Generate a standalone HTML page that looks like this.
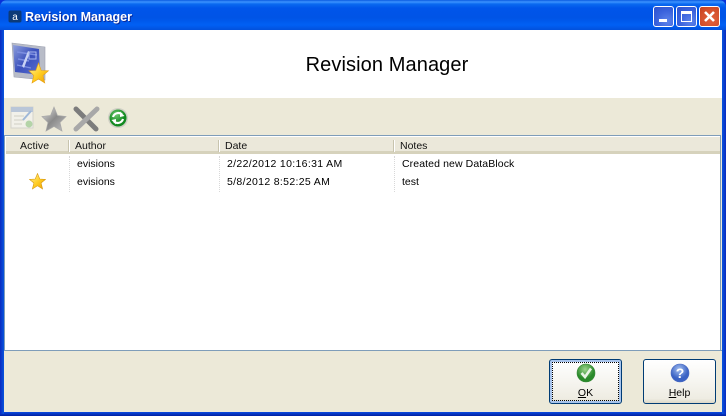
<!DOCTYPE html>
<html>
<head>
<meta charset="utf-8">
<style>
html,body{margin:0;padding:0;width:726px;height:416px;overflow:hidden;background:#0831d9}
*{box-sizing:border-box}
body{position:relative;font-family:"Liberation Sans",Tahoma,sans-serif;font-size:11px;color:#000}
.a{position:absolute}
#title{left:0;top:0;width:726px;height:30px;border-radius:7px 7px 0 0;background:linear-gradient(180deg,#0a5be0 0,#3c93ff 2px,#0a6af0 4px,#0055ea 8px,#0054e6 18px,#0160f4 25px,#0250dc 30px)}
#ttext{left:25px;top:10px;font-size:12.5px;font-weight:bold;color:#fff;text-shadow:1px 1px 0 #0a2a9a;white-space:nowrap}
.wb{top:6px;width:21px;height:21px;border:1px solid #fff;border-radius:3px;background:radial-gradient(circle at 70% 75%,#5d83ea 0,#3a62dc 55%,#2c50cc 100%)}
#client{left:4px;top:30px;width:718px;height:382px;background:#ece9d8}
#head{left:0;top:0;width:718px;height:68px;background:#fff}
#h1{left:0;top:22px;width:766px;text-align:center;font-size:20px;line-height:26px;color:#000;letter-spacing:.1px}
#list{left:0;top:105px;width:717px;height:216px;background:#fff;border:1px solid #7f9db9}
#lh{left:1px;top:1px;width:714px;height:17px;background:#ebe8da;border-bottom:3px solid #d6d2bc}
.sep{top:4px;height:12px;background:#c8c4ae;border-right:1px solid #fff;width:2px}
.ht{top:4px;color:#111;font-size:10.5px;line-height:13px;white-space:nowrap}
.c{font-size:10.5px;line-height:13px;white-space:nowrap;color:#000}
.dl{top:20px;height:36px;width:1px;border-left:1px dotted #d8d8d8}
.btn{top:329px;width:73px;height:45px;border:1px solid #003c74;border-radius:3px;background:linear-gradient(180deg,#fff 0,#f6f5f0 50%,#eeece2 90%,#dcd8c8 100%);text-align:center}
.btn span{position:absolute;left:0;right:0;top:27px;font-size:10.5px;line-height:13px}
</style>
</head>
<body>
<div class="a" id="title"></div>
<svg class="a" style="left:8px;top:10px" width="14" height="13" viewBox="0 0 14 13"><rect x="0.5" y="0.5" width="13" height="12" rx="2" fill="#0c3a78"/><text x="7" y="10" font-size="10" font-family="Liberation Sans" fill="#fff" text-anchor="middle">a</text></svg>
<div class="a" id="ttext">Revision Manager</div>
<div class="a wb" style="left:653px"><div class="a" style="left:5px;top:12px;width:8px;height:3px;background:#fff"></div></div>
<div class="a wb" style="left:676px"><div class="a" style="left:4px;top:4px;width:11px;height:11px;border:1px solid #fff;border-top:3px solid #fff"></div></div>
<div class="a wb" style="left:699px;background:radial-gradient(circle at 60% 65%,#e2623c 0,#d4502c 60%,#c43e1c 100%)"><svg class="a" style="left:3px;top:3px" width="13" height="13" viewBox="0 0 13 13"><path d="M2 2 L11 11 M11 2 L2 11" stroke="#fff" stroke-width="2.6"/></svg></div>

<div class="a" id="client">
 <div class="a" id="head">
  <svg class="a" style="left:7px;top:12px" width="40" height="46" viewBox="0 0 40 46">
   <defs><linearGradient id="s" x1="0" y1="0" x2="1" y2="1"><stop offset="0" stop-color="#fff5a0"/><stop offset=".55" stop-color="#ffcc20"/><stop offset="1" stop-color="#e89a08"/></linearGradient>
   <linearGradient id="m" x1="0" y1="0" x2="1" y2="1"><stop offset="0" stop-color="#8fa0dc"/><stop offset=".5" stop-color="#3a50bc"/><stop offset="1" stop-color="#5a70d0"/></linearGradient></defs>
   <path d="M1 1 L34 5 L34 38 L3 35 Z" fill="#b8bcc8" stroke="#9ca0b0" stroke-width=".6"/>
   <path d="M2 3 L28 7 L29 33 L4 30 Z" fill="url(#m)"/>
   <path d="M6 10 L26 13 M6 23 L20 26 M7 17 L18 19" stroke="#7c8ee0" stroke-width="1.4" fill="none"/>
   <path d="M11 24 L17 9 L19 10 L13 26 Z" fill="#c8d2f4"/>
   <rect x="18" y="10" width="7" height="7" fill="none" stroke="#aab8f0"/>
   <path d="M27.500 21 L30.200 28.500 L37.500 28.800 L32 33.500 L33.800 41 L27.500 37 L21 41 L22.800 33.500 L18 28.800 L24.800 28.500 Z" fill="url(#s)" stroke="#e8a010" stroke-width=".6"/>
  </svg>
  <div class="a" id="h1">Revision Manager</div>
 </div>
 <svg class="a" style="left:6px;top:74px" width="128" height="28" viewBox="0 0 128 28">
  <defs>
   <linearGradient id="g1" x1="0" y1="0" x2="1" y2="1"><stop offset="0" stop-color="#e8e8e8"/><stop offset=".5" stop-color="#8a8a8a"/><stop offset="1" stop-color="#c4c4c4"/></linearGradient>
   <radialGradient id="g2" cx=".4" cy=".3"><stop offset="0" stop-color="#70c870"/><stop offset="1" stop-color="#128a20"/></radialGradient>
  </defs>
  <rect x="1" y="3" width="22" height="21" fill="#f2f1ea" stroke="#d4d4cc"/>
  <rect x="1" y="3" width="22" height="5" fill="#b9c6d8"/>
  <path d="M4 12 H14 M4 16 H14 M4 20 H12" stroke="#d0d0c4"/>
  <path d="M13 16 L21 7" stroke="#9fb8d8" stroke-width="2"/>
  <circle cx="19" cy="20" r="3.500" fill="#b4d4a8"/>
  <path d="M44 3 L47.500 11.500 L56 12.500 L50 18.500 L52 27 L44 22.500 L36 27 L38 18.500 L32 12.500 L40.500 11.500 Z" fill="url(#g1)" stroke="#a8a8a8" stroke-width=".7"/>
  <path d="M66 5 L86 25" stroke="#7c7c7c" stroke-width="5" stroke-linecap="round"/>
  <path d="M87 5 L66 25" stroke="#a8a8a8" stroke-width="5" stroke-linecap="round"/>
  <circle cx="108" cy="14" r="10" fill="#cfcfc4"/>
  <circle cx="108" cy="14" r="8.500" fill="url(#g2)"/>
  <path d="M103 13 A5.500 5.500 0 0 1 112 10.500 M113 15 A5.500 5.500 0 0 1 104 17.500" stroke="#fff" stroke-width="2.200" fill="none"/>
  <path d="M110 7.500 L114.500 12 L110 13 Z M106 20.500 L101.500 16 L106 15 Z" fill="#fff"/>
 </svg>
 <div class="a" id="list">
  <div class="a" id="lh"></div>
  <div class="a ht" style="left:15px;letter-spacing:.1px">Active</div>
  <div class="a sep" style="left:63px"></div>
  <div class="a ht" style="left:70px">Author</div>
  <div class="a sep" style="left:213px"></div>
  <div class="a ht" style="left:220px">Date</div>
  <div class="a sep" style="left:388px"></div>
  <div class="a ht" style="left:395px">Notes</div>
  <div class="a dl" style="left:64px"></div>
  <div class="a dl" style="left:214px"></div>
  <div class="a dl" style="left:389px"></div>
  <div class="a c" style="left:72px;top:22px">evisions</div>
  <div class="a c" style="left:222px;top:22px;letter-spacing:.33px">2/22/2012 10:16:31 AM</div>
  <div class="a c" style="left:397px;top:22px;letter-spacing:.1px">Created new DataBlock</div>
  <svg class="a" style="left:24px;top:37px" width="17" height="17" viewBox="0 0 17 17"><path d="M8.500 0.500 L10.800 6 L16.500 6.400 L12.100 10 L13.600 16 L8.500 12.800 L3.400 16 L4.900 10 L0.500 6.400 L6.200 6 Z" fill="url(#s)" stroke="#d89810" stroke-width=".6"/></svg>
  <div class="a c" style="left:72px;top:40px">evisions</div>
  <div class="a c" style="left:222px;top:40px;letter-spacing:.33px">5/8/2012 8:52:25 AM</div>
  <div class="a c" style="left:397px;top:40px">test</div>
 </div>
 <div class="a" style="left:0;top:320px;width:718px;height:1px;background:#7f9db9"></div>
 <div class="a btn" style="left:545px;box-shadow:inset 0 0 0 2px #a8c4ec">
  <div class="a" style="left:2px;top:2px;right:2px;bottom:2px;border:1px dotted #000"></div>
  <svg class="a" style="left:26px;top:3px" width="20" height="20" viewBox="0 0 20 20"><defs><radialGradient id="g3" cx=".45" cy=".3"><stop offset="0" stop-color="#9cd48c"/><stop offset="1" stop-color="#2a8a2a"/></radialGradient></defs><circle cx="10" cy="10" r="9" fill="url(#g3)" stroke="#3a8a3a" stroke-width=".6"/><path d="M5.500 10 L9 14 L15 5.500" stroke="#e8f4e4" stroke-width="2.600" fill="none"/></svg>
  <span><u>O</u>K</span>
 </div>
 <div class="a btn" style="left:639px">
  <svg class="a" style="left:26px;top:3px" width="20" height="20" viewBox="0 0 20 20"><defs><radialGradient id="g4" cx=".45" cy=".3"><stop offset="0" stop-color="#a4c0f0"/><stop offset="1" stop-color="#3a62c4"/></radialGradient></defs><circle cx="10" cy="10" r="9" fill="url(#g4)" stroke="#4a6ac0" stroke-width=".6"/><text x="10" y="15" font-size="14" font-weight="bold" font-family="Liberation Sans" fill="#fff" text-anchor="middle">?</text></svg>
  <span><u>H</u>elp</span>
 </div>
</div>
<div class="a" style="left:0;top:412px;width:726px;height:4px;background:linear-gradient(180deg,#0a4ae0,#001ea0)"></div>
<div class="a" style="left:0;top:30px;width:4px;height:384px;background:linear-gradient(90deg,#0a2ac0,#0855dd)"></div>
<div class="a" style="left:722px;top:30px;width:4px;height:384px;background:linear-gradient(90deg,#0855dd,#0a2ac0)"></div>
</body>
</html>
